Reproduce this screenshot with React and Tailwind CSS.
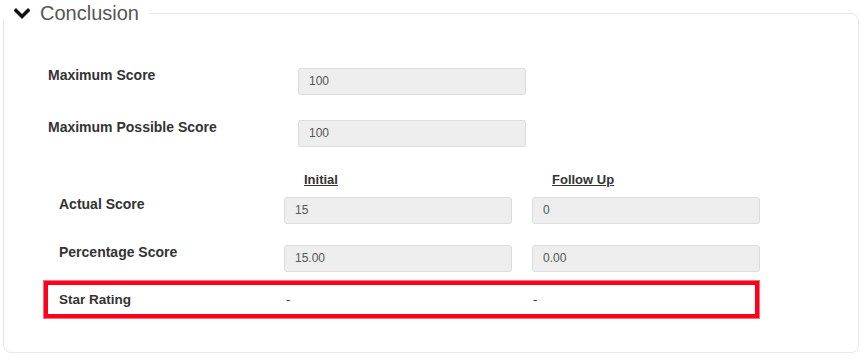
const Field = ({ value, className = '' }) => (
  <div className={`h-[27px] w-[228px] rounded-[3px] border border-[#dcdcdc] bg-[#eeeeee] px-[10px] text-[12px] leading-[25px] text-[#555] ${className}`}>
    {value}
  </div>
)

const App = () => {
  return (
    <div className="h-[359px] w-[864px] bg-white pl-[3px] font-['Liberation_Sans',Arial,sans-serif]">
      <fieldset className="w-[856px] rounded-[8px] border border-[#e3e8ee] pb-[33px]">
        <legend className="flex h-[26px] items-center pl-[10px] pr-[10px] text-[20px] text-[#555]">
          <svg width="16" height="12" viewBox="0 0 16 12" className="mr-[10px] mt-[1px]">
            <path d="M2 2.5 L8 8.5 L14 2.5" fill="none" stroke="#111" strokeWidth="3.4" strokeLinecap="square" />
          </svg>
          <span className="leading-[26px]">Conclusion</span>
        </legend>

        <div className="pt-[41px]">
          <div className="flex items-start pl-[44px]">
            <div className="w-[250px] text-[14px] font-bold leading-[16px] text-[#333]">Maximum Score</div>
            <Field value="100" className="mt-[1px]" />
          </div>

          <div className="mt-[24px] flex items-start pl-[44px]">
            <div className="w-[250px] text-[14px] font-bold leading-[16px] text-[#333]">Maximum Possible Score</div>
            <Field value="100" className="mt-[1px]" />
          </div>

          <div className="mt-[25px] flex pl-[300px] text-[13px] font-bold leading-[16px] text-[#333]">
            <span className="w-[248px] underline">Initial</span>
            <span className="underline">Follow Up</span>
          </div>

          <div className="mt-[8px] flex items-start pl-[55px]">
            <div className="w-[225px] text-[14px] font-bold leading-[16px] text-[#333]">Actual Score</div>
            <Field value="15" className="mt-[1px]" />
            <Field value="0" className="ml-[20px] mt-[1px]" />
          </div>

          <div className="mt-[20px] flex items-start pl-[55px]">
            <div className="w-[225px] text-[14px] font-bold leading-[16px] text-[#333]">Percentage Score</div>
            <Field value="15.00" className="mt-[1px]" />
            <Field value="0.00" className="ml-[20px] mt-[1px]" />
          </div>

          <div className="ml-[39px] mt-[8px] w-[717px] border border-[#f2727f]">
            <div className="flex h-[37px] items-center border-[4px] border-[#ff001c] pl-[11px] text-[13px] leading-[16px]">
              <div className="w-[227px] text-[13.5px] font-bold text-[#333]">Star Rating</div>
              <div className="w-[247px] text-[#333]">-</div>
              <div className="text-[#333]">-</div>
            </div>
          </div>
        </div>
      </fieldset>
    </div>
  )
}

export default App
